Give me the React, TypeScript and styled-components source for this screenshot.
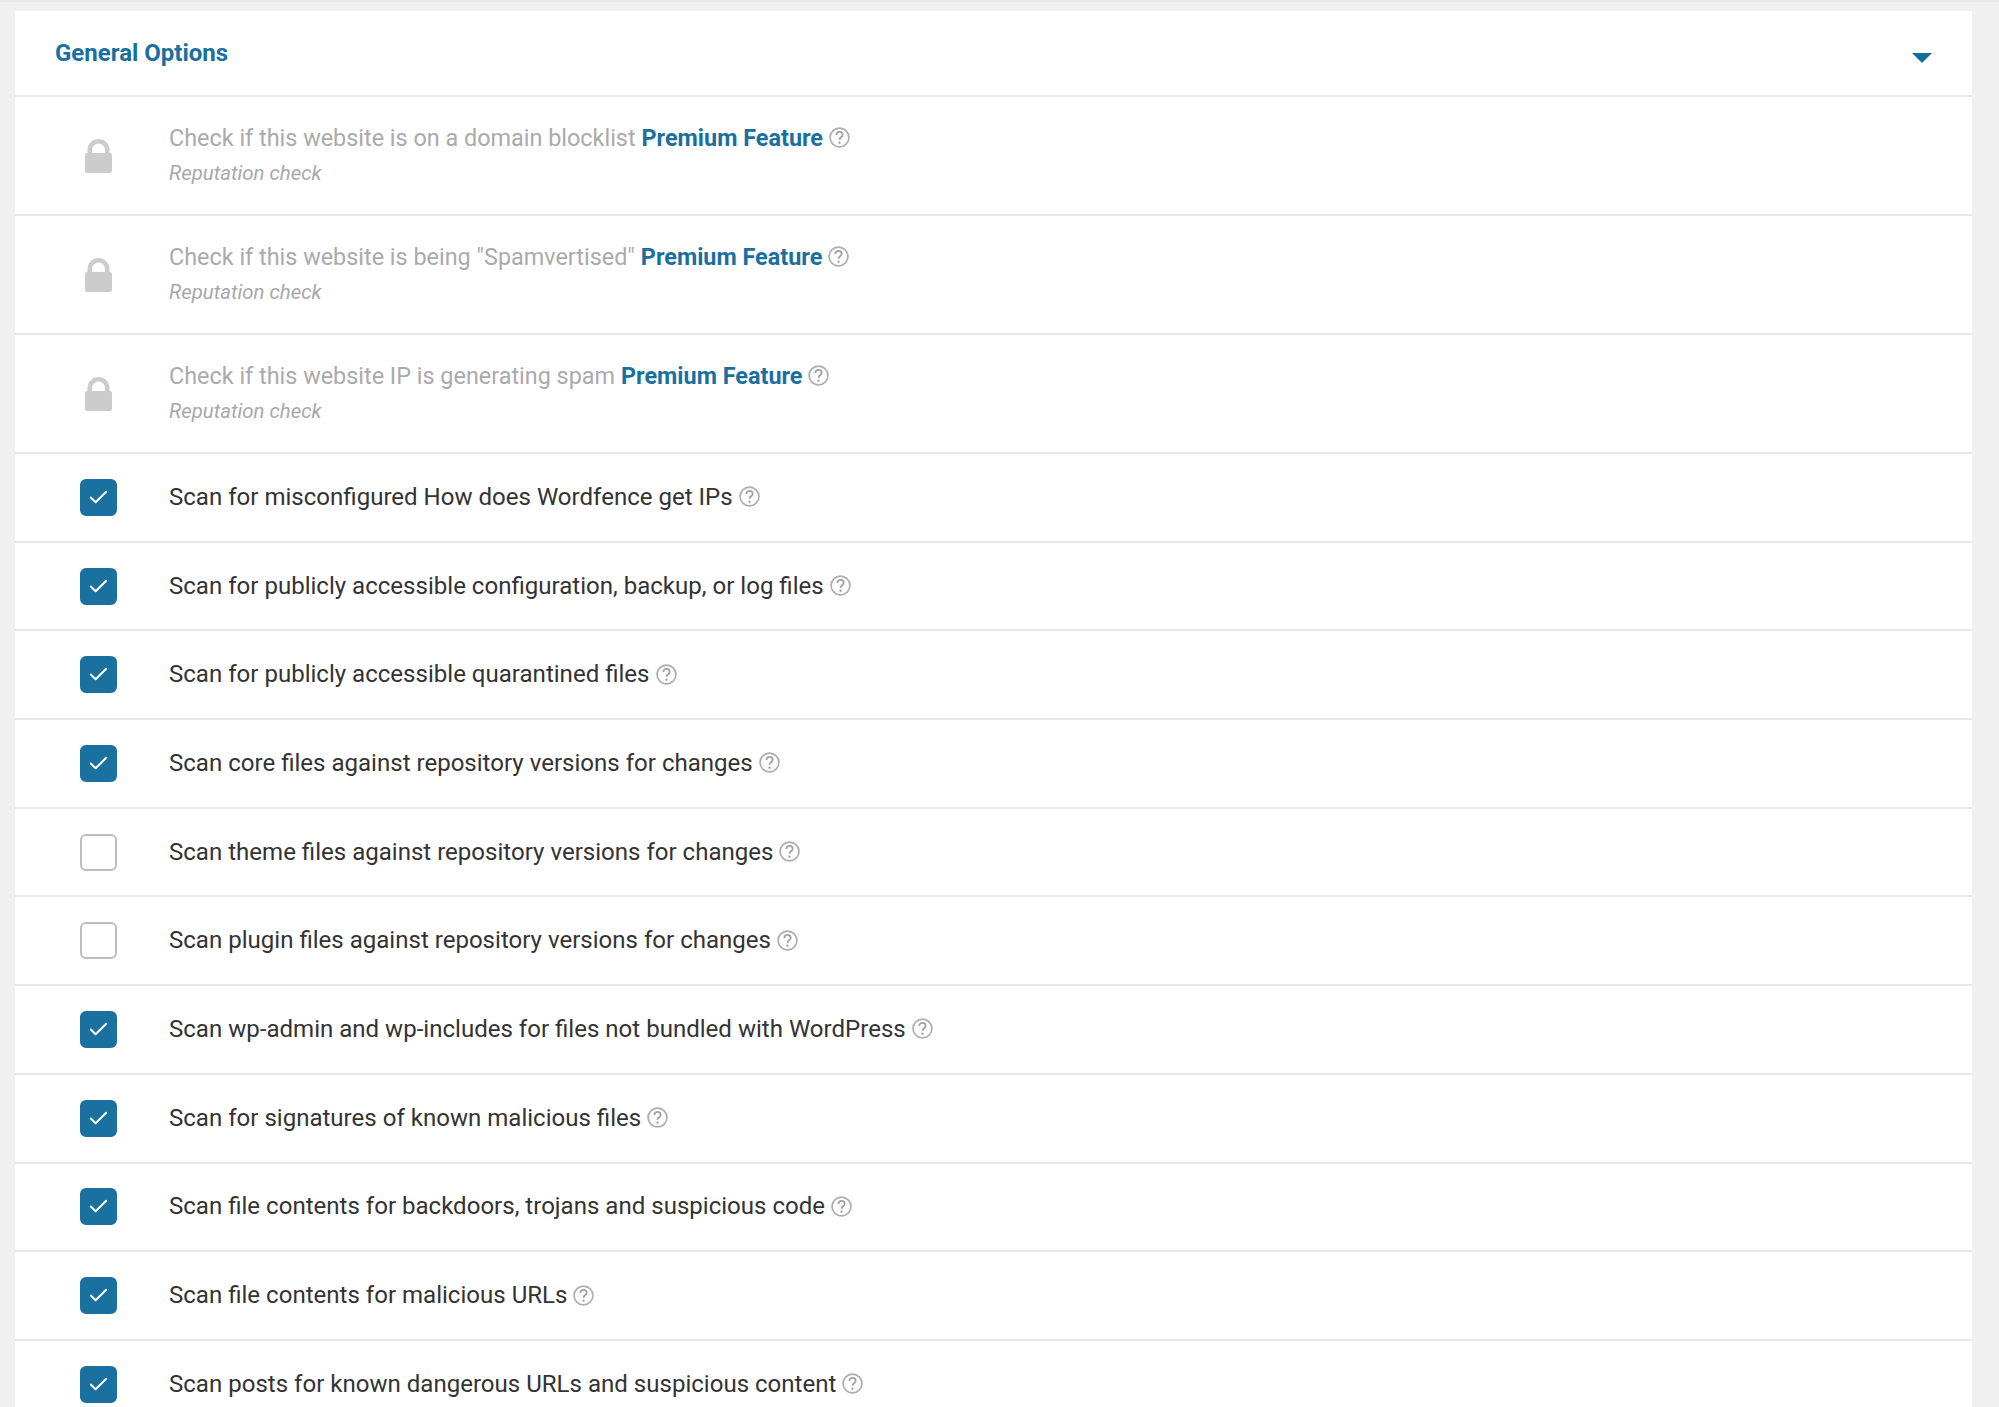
import styled, { createGlobalStyle } from 'styled-components';
import { Check } from 'lucide-react';

const GlobalStyle = createGlobalStyle`
    html, body {
        margin: 0;
        padding: 0;
        background: #f0f0f0;
        font-family: Roboto, "Liberation Sans", sans-serif;
        overflow: hidden;
    }
`;

const premiumOptions = [
    'Check if this website is on a domain blocklist',
    'Check if this website is being "Spamvertised"',
    'Check if this website IP is generating spam',
];

const scanOptions = [
    { label: 'Scan for misconfigured How does Wordfence get IPs', checked: true },
    { label: 'Scan for publicly accessible configuration, backup, or log files', checked: true },
    { label: 'Scan for publicly accessible quarantined files', checked: true },
    { label: 'Scan core files against repository versions for changes', checked: true },
    { label: 'Scan theme files against repository versions for changes', checked: false },
    { label: 'Scan plugin files against repository versions for changes', checked: false },
    { label: 'Scan wp-admin and wp-includes for files not bundled with WordPress', checked: true },
    { label: 'Scan for signatures of known malicious files', checked: true },
    { label: 'Scan file contents for backdoors, trojans and suspicious code', checked: true },
    { label: 'Scan file contents for malicious URLs', checked: true },
    { label: 'Scan posts for known dangerous URLs and suspicious content', checked: true },
];

function HelpIcon() {
    return (
        <HelpSvg viewBox="0 0 20 20" fill="none">
            <circle cx="10" cy="10" r="9" stroke="#adadad" strokeWidth="1.6" />
            <path
                d="M7 7.600c0-1.800 1.300-3 3-3s3 1.100 3 2.700c0 2.400-3 2.500-3 4.900"
                stroke="#a0a0a0"
                strokeWidth="1.700"
            />
            <circle cx="10" cy="15" r="1.100" fill="#a0a0a0" />
        </HelpSvg>
    );
}

function LockIcon() {
    return (
        <LockSvg viewBox="0 0 27 34" fill="none">
            <path d="M4.750 16V11a8.750 8.750 0 0 1 17.500 0V16" stroke="#cccccc" strokeWidth="4.500" />
            <rect y="14" width="27" height="20" rx="2" fill="#cccccc" />
        </LockSvg>
    );
}

function App() {
    return (
        <>
            <GlobalStyle />
            <Page>
                <Card>
                    <Header>
                        <HeaderTitle>General Options</HeaderTitle>
                        <Caret />
                    </Header>
                    {premiumOptions.map((label) => (
                        <PremiumRow key={label}>
                            <Control>
                                <LockIcon />
                            </Control>
                            <PremiumText>
                                <PremiumLabel>
                                    <Muted>{label}</Muted>
                                    <Premium>Premium Feature</Premium>
                                    <HelpIcon />
                                </PremiumLabel>
                                <SubLabel>Reputation check</SubLabel>
                            </PremiumText>
                        </PremiumRow>
                    ))}
                    {scanOptions.map((option) => (
                        <Row key={option.label}>
                            <Control>
                                <CheckBox checked={option.checked}>
                                    {option.checked && <Check size={23} color="#fff" strokeWidth={2.1} />}
                                </CheckBox>
                            </Control>
                            <Label>
                                <span>{option.label}</span>
                                <HelpIcon />
                            </Label>
                        </Row>
                    ))}
                </Card>
            </Page>
        </>
    );
}

export default App;

const Page = styled.div`
    height: 1407px;
    overflow: hidden;
    padding: 11px 27px 0 15px;
    box-sizing: border-box;
    background: linear-gradient(#e8e8e8 0 2px, #f0f0f0 2px);
`;

const Card = styled.div`
    background: #fff;
`;

const Header = styled.div`
    height: 84px;
    padding: 0 40px;
    display: flex;
    align-items: center;
    justify-content: space-between;
    border-bottom: 2px solid #e8e8e8;
`;

const HeaderTitle = styled.div`
    font-size: 24px;
    font-weight: 700;
    color: #1a6f9f;
`;

const Caret = styled.div`
    width: 0;
    height: 0;
    margin-top: 10px;
    border-left: 10px solid transparent;
    border-right: 10px solid transparent;
    border-top: 10px solid #0f6f9f;
`;

const Row = styled.div`
    height: 88.700px;
    box-sizing: border-box;
    display: flex;
    align-items: center;
    border-bottom: 2px solid #e8e8e8;
`;

const PremiumRow = styled(Row)`
    height: 119px;
`;

const PremiumText = styled.div`
    margin-top: -2px;
`;

const Control = styled.div`
    width: 154px;
    flex: none;
    display: flex;
    justify-content: center;
    padding-left: 12px;
    box-sizing: border-box;
`;

const LockSvg = styled.svg`
    width: 27px;
    height: 34px;
    margin-left: 1px;
`;

const CheckBox = styled.div<{ checked: boolean }>`
    width: 37px;
    height: 37px;
    box-sizing: border-box;
    border-radius: 6px;
    display: flex;
    align-items: center;
    justify-content: center;
    background: ${(props) => (props.checked ? '#1a71a0' : '#fff')};
    border: 2px solid ${(props) => (props.checked ? '#1a71a0' : '#bdbdbd')};
`;

const Label = styled.div`
    font-size: 24.050px;
    line-height: 28px;
    color: #333;
    display: flex;
    align-items: center;
    gap: 6px;
    white-space: pre;
    margin-top: -1px;
`;

const PremiumLabel = styled(Label)`
    font-size: 23.400px;
    margin-top: 0;
`;

const Muted = styled.span`
    color: #aaa;
`;

const Premium = styled.span`
    color: #1a6f9f;
    font-weight: 700;
`;

const SubLabel = styled.div`
    font-size: 20.400px;
    font-style: italic;
    color: #a8a8a8;
    margin-top: 8px;
    line-height: 26px;
`;

const HelpSvg = styled.svg`
    width: 21px;
    height: 21px;
    flex: none;
`;
